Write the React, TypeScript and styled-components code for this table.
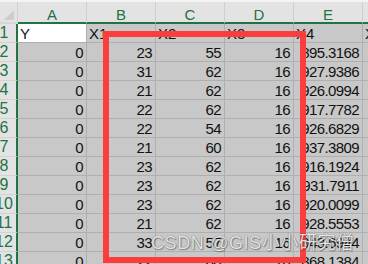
import { Fragment } from "react";
import styled, { createGlobalStyle } from "styled-components";

const GlobalStyle = createGlobalStyle`
  html, body {
    margin: 0;
    padding: 0;
    width: 368px;
    height: 264px;
    overflow: hidden;
    background: #f4f4f4;
  }
  body {
    font-family: "Liberation Sans", Arial, sans-serif;
  }
`;

const Sheet = styled.div`
  position: relative;
  width: 368px;
  height: 264px;
  overflow: hidden;
  padding-top: 2px;
  box-sizing: border-box;
`;

const Grid = styled.div`
  display: grid;
  grid-template-columns: 26px repeat(6, 69px);
  grid-template-rows: 22px;
  grid-auto-rows: 19px;
  margin-left: -8px;
`;

const Corner = styled.div`
  background: #e3e3e3;
  border-right: 1px solid #d0d0d0;
  border-bottom: 2px solid #d6d6d6;
  box-sizing: border-box;
  display: flex;
  align-items: flex-end;
  justify-content: flex-end;
  padding: 0 3px 2px 0;

  &::after {
    content: "";
    width: 0;
    height: 0;
    border-left: 10px solid transparent;
    border-bottom: 10px solid #cdcdcd;
  }
`;

const ColHead = styled.div`
  background: #e3e3e3;
  border-right: 1px solid #cfcfcf;
  border-bottom: 2px solid #217346;
  box-sizing: border-box;
  color: #217346;
  font-size: 15px;
  line-height: 15px;
  display: flex;
  align-items: flex-end;
  justify-content: center;
`;

const RowHead = styled.div`
  background: #e3e3e3;
  border-right: 2px solid #217346;
  border-bottom: 1px solid #d2d2d2;
  box-sizing: border-box;
  color: #217346;
  font-size: 16px;
  line-height: 16px;
  display: flex;
  align-items: flex-end;
  justify-content: center;
  padding-bottom: 1px;
`;

const Cell = styled.div<{ $num?: boolean; $active?: boolean }>`
  background: ${(p) => (p.$active ? "#ffffff" : "#c8c8c8")};
  border-right: 1px solid #afafaf;
  border-bottom: 1px solid #afafaf;
  box-sizing: border-box;
  color: #111;
  font-size: 15px;
  line-height: 15px;
  letter-spacing: ${(p) => (p.$num ? "-0.6px" : "0")};
  display: flex;
  align-items: flex-end;
  justify-content: ${(p) => (p.$num ? "flex-end" : "flex-start")};
  padding: 0 3px 1px 2px;
  white-space: nowrap;
  overflow: hidden;
`;

const Highlight = styled.div`
  position: absolute;
  left: 103px;
  top: 31px;
  width: 203px;
  height: 232px;
  border: 6px solid #fb3d3d;
  box-sizing: border-box;
`;

const Watermark = styled.div`
  position: absolute;
  left: 151px;
  top: 233px;
  font-family: "Liberation Sans", "Noto Sans CJK SC", sans-serif;
  font-size: 18px;
  line-height: 20px;
  letter-spacing: 0.6px;
  color: rgba(255, 255, 255, 0.85);
  text-shadow: 0 0 1px rgba(60, 60, 60, 0.9), 1px 1px 1px rgba(0, 0, 0, 0.3);
  white-space: nowrap;
`;

const columns = ["A", "B", "C", "D", "E", "F"];
const titles = ["Y", "X1", "X2", "X3", "X4", "X5"];

const rows = [
  ["0", "23", "55", "16", "895.3168"],
  ["0", "31", "62", "16", "927.9386"],
  ["0", "21", "62", "16", "926.0994"],
  ["0", "22", "62", "16", "917.7782"],
  ["0", "22", "54", "16", "926.6829"],
  ["0", "21", "60", "16", "937.3809"],
  ["0", "23", "62", "16", "916.1924"],
  ["0", "23", "62", "16", "931.7911"],
  ["0", "23", "62", "16", "920.0099"],
  ["0", "21", "62", "16", "928.5553"],
  ["0", "33", "57", "16", "943.6944"],
  ["0", "22", "60", "16", "868.1384"],
];

export default function App() {
  return (
    <>
      <GlobalStyle />
      <Sheet>
        <Grid>
          <Corner />
          {columns.map((c) => (
            <ColHead key={c}>{c}</ColHead>
          ))}

          <RowHead>1</RowHead>
          {titles.map((t, i) => (
            <Cell key={t} $active={i === 0}>
              {t}
            </Cell>
          ))}

          {rows.map((r, i) => (
            <Fragment key={i}>
              <RowHead>{i + 2}</RowHead>
              {r.map((v, j) => (
                <Cell key={j} $num>
                  {v}
                </Cell>
              ))}
              <Cell />
            </Fragment>
          ))}
        </Grid>
        <Highlight />
        <Watermark>CSDN @GIS小小研究僧</Watermark>
      </Sheet>
    </>
  );
}
